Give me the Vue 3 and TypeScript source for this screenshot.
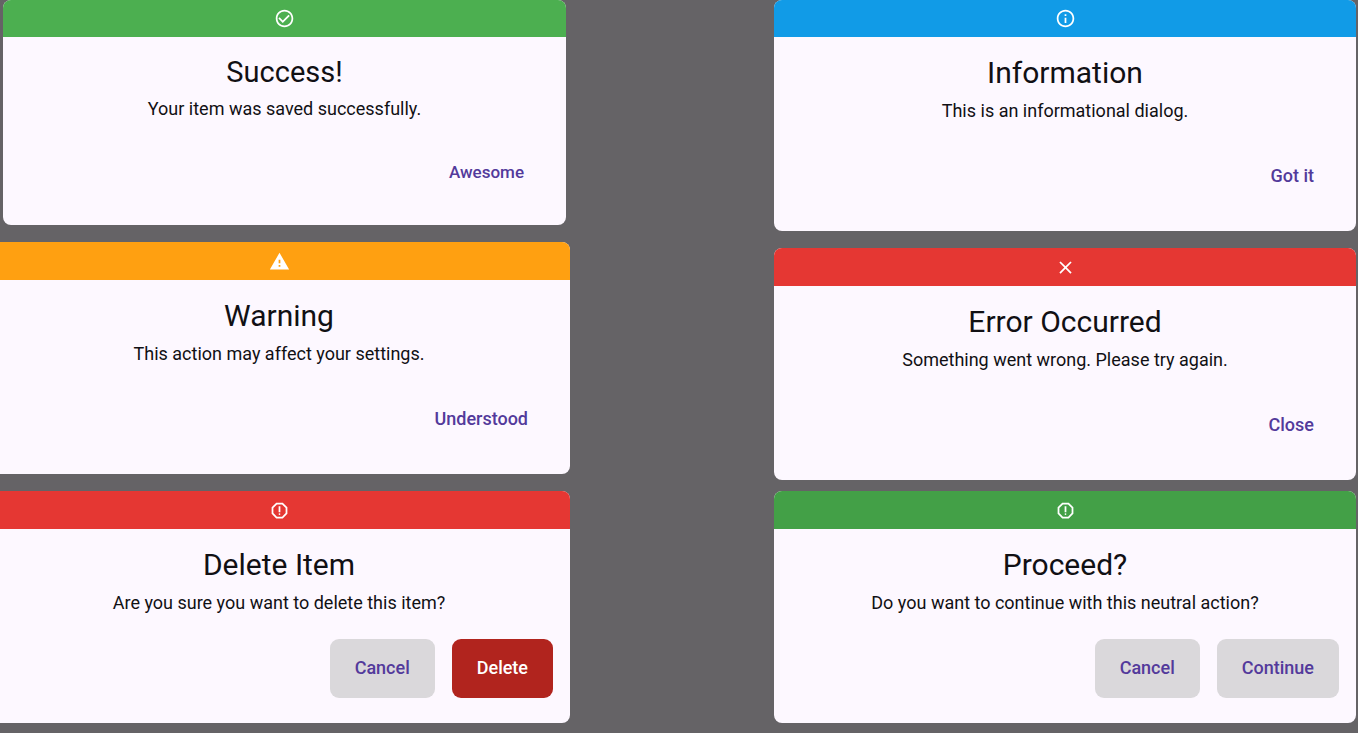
<script setup lang="ts">
type Tone = 'success' | 'info' | 'warning' | 'error' | 'neutral'
type Icon = 'check' | 'info' | 'warning' | 'close' | 'report'

interface Action {
  label: string
  kind: 'text' | 'tonal' | 'danger'
}

interface Dialog {
  id: string
  tone: Tone
  icon: Icon
  title: string
  message: string
  actions: Action[]
}

const icons: Record<Icon, string> = {
  check:
    'M16.59 7.58L10 14.17l-3.59-3.58L5 12l5 5 8-8zM12 2C6.48 2 2 6.48 2 12s4.48 10 10 10 10-4.48 10-10S17.52 2 12 2zm0 18c-4.42 0-8-3.58-8-8s3.58-8 8-8 8 3.58 8 8-3.58 8-8 8z',
  info:
    'M11 7h2v2h-2zm0 4h2v6h-2zm1-9C6.48 2 2 6.48 2 12s4.48 10 10 10 10-4.48 10-10S17.52 2 12 2zm0 18c-4.41 0-8-3.59-8-8s3.59-8 8-8 8 3.59 8 8-3.59 8-8 8z',
  warning: 'M1 21h22L12 2 1 21zm12-3h-2v-2h2v2zm0-4h-2v-4h2v4z',
  close:
    'M19 6.41L17.59 5 12 10.59 6.41 5 5 6.41 10.59 12 5 17.59 6.41 19 12 13.41 17.59 19 19 17.59 13.41 12z',
  report:
    'M15.73 3H8.27L3 8.27v7.46L8.27 21h7.46L21 15.73V8.27L15.73 3zM19 14.9L14.9 19H9.1L5 14.9V9.1L9.1 5h5.8L19 9.1v5.8zM11 7h2v7h-2zM12 15a1 1 0 1 0 0 2 1 1 0 0 0 0-2z',
}

const columns: Dialog[][] = [
  [
    {
      id: 'saved',
      tone: 'success',
      icon: 'check',
      title: 'Success!',
      message: 'Your item was saved successfully.',
      actions: [{ label: 'Awesome', kind: 'text' }],
    },
    {
      id: 'warning',
      tone: 'warning',
      icon: 'warning',
      title: 'Warning',
      message: 'This action may affect your settings.',
      actions: [{ label: 'Understood', kind: 'text' }],
    },
    {
      id: 'delete',
      tone: 'error',
      icon: 'report',
      title: 'Delete Item',
      message: 'Are you sure you want to delete this item?',
      actions: [
        { label: 'Cancel', kind: 'tonal' },
        { label: 'Delete', kind: 'danger' },
      ],
    },
  ],
  [
    {
      id: 'information',
      tone: 'info',
      icon: 'info',
      title: 'Information',
      message: 'This is an informational dialog.',
      actions: [{ label: 'Got it', kind: 'text' }],
    },
    {
      id: 'failure',
      tone: 'error',
      icon: 'close',
      title: 'Error Occurred',
      message: 'Something went wrong. Please try again.',
      actions: [{ label: 'Close', kind: 'text' }],
    },
    {
      id: 'proceed',
      tone: 'neutral',
      icon: 'report',
      title: 'Proceed?',
      message: 'Do you want to continue with this neutral action?',
      actions: [
        { label: 'Cancel', kind: 'tonal' },
        { label: 'Continue', kind: 'tonal' },
      ],
    },
  ],
]
</script>

<template>
  <main class="board">
    <div v-for="(column, i) in columns" :key="i" class="column">
      <section
        v-for="dialog in column"
        :key="dialog.id"
        class="card"
        :class="dialog.id"
        role="dialog"
        :aria-labelledby="`${dialog.id}-title`"
        :aria-describedby="`${dialog.id}-message`"
      >
        <header class="banner" :class="dialog.tone">
          <svg class="icon" viewBox="0 0 24 24" aria-hidden="true">
            <path :d="icons[dialog.icon]" />
          </svg>
        </header>
        <div class="body">
          <h2 :id="`${dialog.id}-title`" class="title">{{ dialog.title }}</h2>
          <p :id="`${dialog.id}-message`" class="message">{{ dialog.message }}</p>
          <div class="actions">
            <button
              v-for="action in dialog.actions"
              :key="action.label"
              type="button"
              class="button"
              :class="action.kind"
            >
              {{ action.label }}
            </button>
          </div>
        </div>
      </section>
    </div>
  </main>
</template>

<style>
body {
  margin: 0;
  background: #656366;
  overflow: hidden;
}
</style>

<style scoped>
.board {
  display: grid;
  grid-template-columns: minmax(0, 1fr) minmax(0, 1fr);
  column-gap: 204px;
  margin: 0 2px 0 -12px;
  font-family: Roboto, 'Liberation Sans', sans-serif;
  color: #111014;
}

.card {
  border-radius: 8px;
  overflow: hidden;
  background: #fdf8ff;
}

.card + .card {
  margin-top: 17px;
}

.card + .card.proceed {
  margin-top: 11px;
}

.banner {
  display: flex;
  align-items: center;
  justify-content: center;
  height: 38px;
}

.success {
  background: #4caf50;
}

.info {
  background: #119be7;
}

.banner.warning {
  background: #ffa011;
}

.error {
  background: #e53733;
}

.neutral {
  background: #43a047;
}

.icon {
  width: 21px;
  height: 21px;
  fill: #fff;
}

.body {
  padding: 16px 17px 25px;
  text-align: center;
}

.title {
  margin: 0;
  font-size: 30px;
  line-height: 40px;
  font-weight: 400;
}

.message {
  margin: 6px 0 0;
  font-size: 18px;
  line-height: 24px;
}

.actions {
  display: flex;
  justify-content: flex-end;
  gap: 17px;
  margin-top: 24px;
}

.button {
  height: 59px;
  padding: 0 25px 2px;
  border: 0;
  border-radius: 9px;
  background: transparent;
  color: #533a9b;
  font-family: inherit;
  font-size: 18px;
  line-height: 24px;
  font-weight: 500;
  cursor: pointer;
}

.button.tonal {
  background: #dad8db;
}

.button.danger {
  background: #b1241e;
  color: #fff;
}

.saved {
  margin: 0 4px 0 15px;
}

.saved .banner,
.information .banner {
  height: 37px;
}

.saved .body {
  padding: 15px 17px 24px;
}

.saved .title {
  font-size: 29px;
}

.saved .message {
  margin-top: 5px;
}

.saved .actions {
  margin-top: 23px;
}

.saved .button {
  height: 57px;
  font-size: 17px;
}
</style>
